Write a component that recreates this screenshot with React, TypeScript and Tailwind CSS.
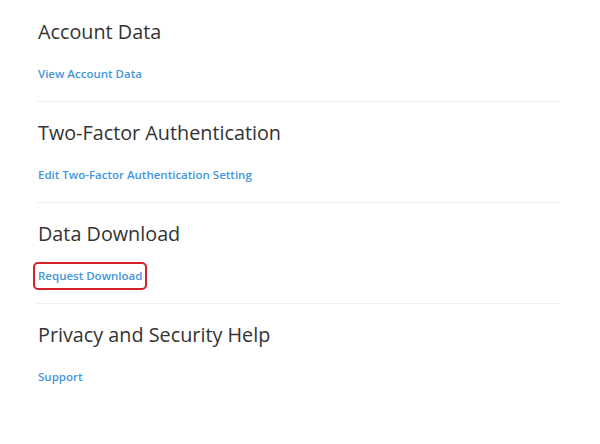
const sections = [
  { title: "Account Data", link: "View Account Data" },
  { title: "Two-Factor Authentication", link: "Edit Two-Factor Authentication Setting" },
  { title: "Data Download", link: "Request Download", highlight: true },
  { title: "Privacy and Security Help", link: "Support" },
];

export default function App() {
  return (
    <main
      className="min-h-screen w-full bg-white text-[#262626]"
      style={{ fontFamily: '"Open Sans", "Noto Sans", sans-serif' }}
    >
      <div className="ml-[37px] w-[523px] pt-[18px]">
        {sections.map((s, i) => (
          <section
            key={s.title}
            className={
              i < sections.length - 1
                ? "border-b border-[#efefef] pb-[19px] mb-[17px]"
                : "pb-[19px]"
            }
          >
            <h2 className="h-[28px] pl-[1px] text-[19.8px] leading-[28px] font-normal text-[#333333]">
              {s.title}
            </h2>
            <div className="mt-[20px] flex h-[16px] items-center">
              {s.highlight ? (
                <span className="-ml-[4px] -my-[5px] rounded-[5px] border-2 border-[#d3222c] px-[3px] py-[4px]">
                  <a className="block text-[11.5px] leading-[16px] font-semibold text-[#4396d9]">{s.link}</a>
                </span>
              ) : (
                <a className="pl-[1px] text-[11.5px] leading-[16px] font-semibold text-[#4396d9]">{s.link}</a>
              )}
            </div>
          </section>
        ))}
      </div>
    </main>
  );
}
